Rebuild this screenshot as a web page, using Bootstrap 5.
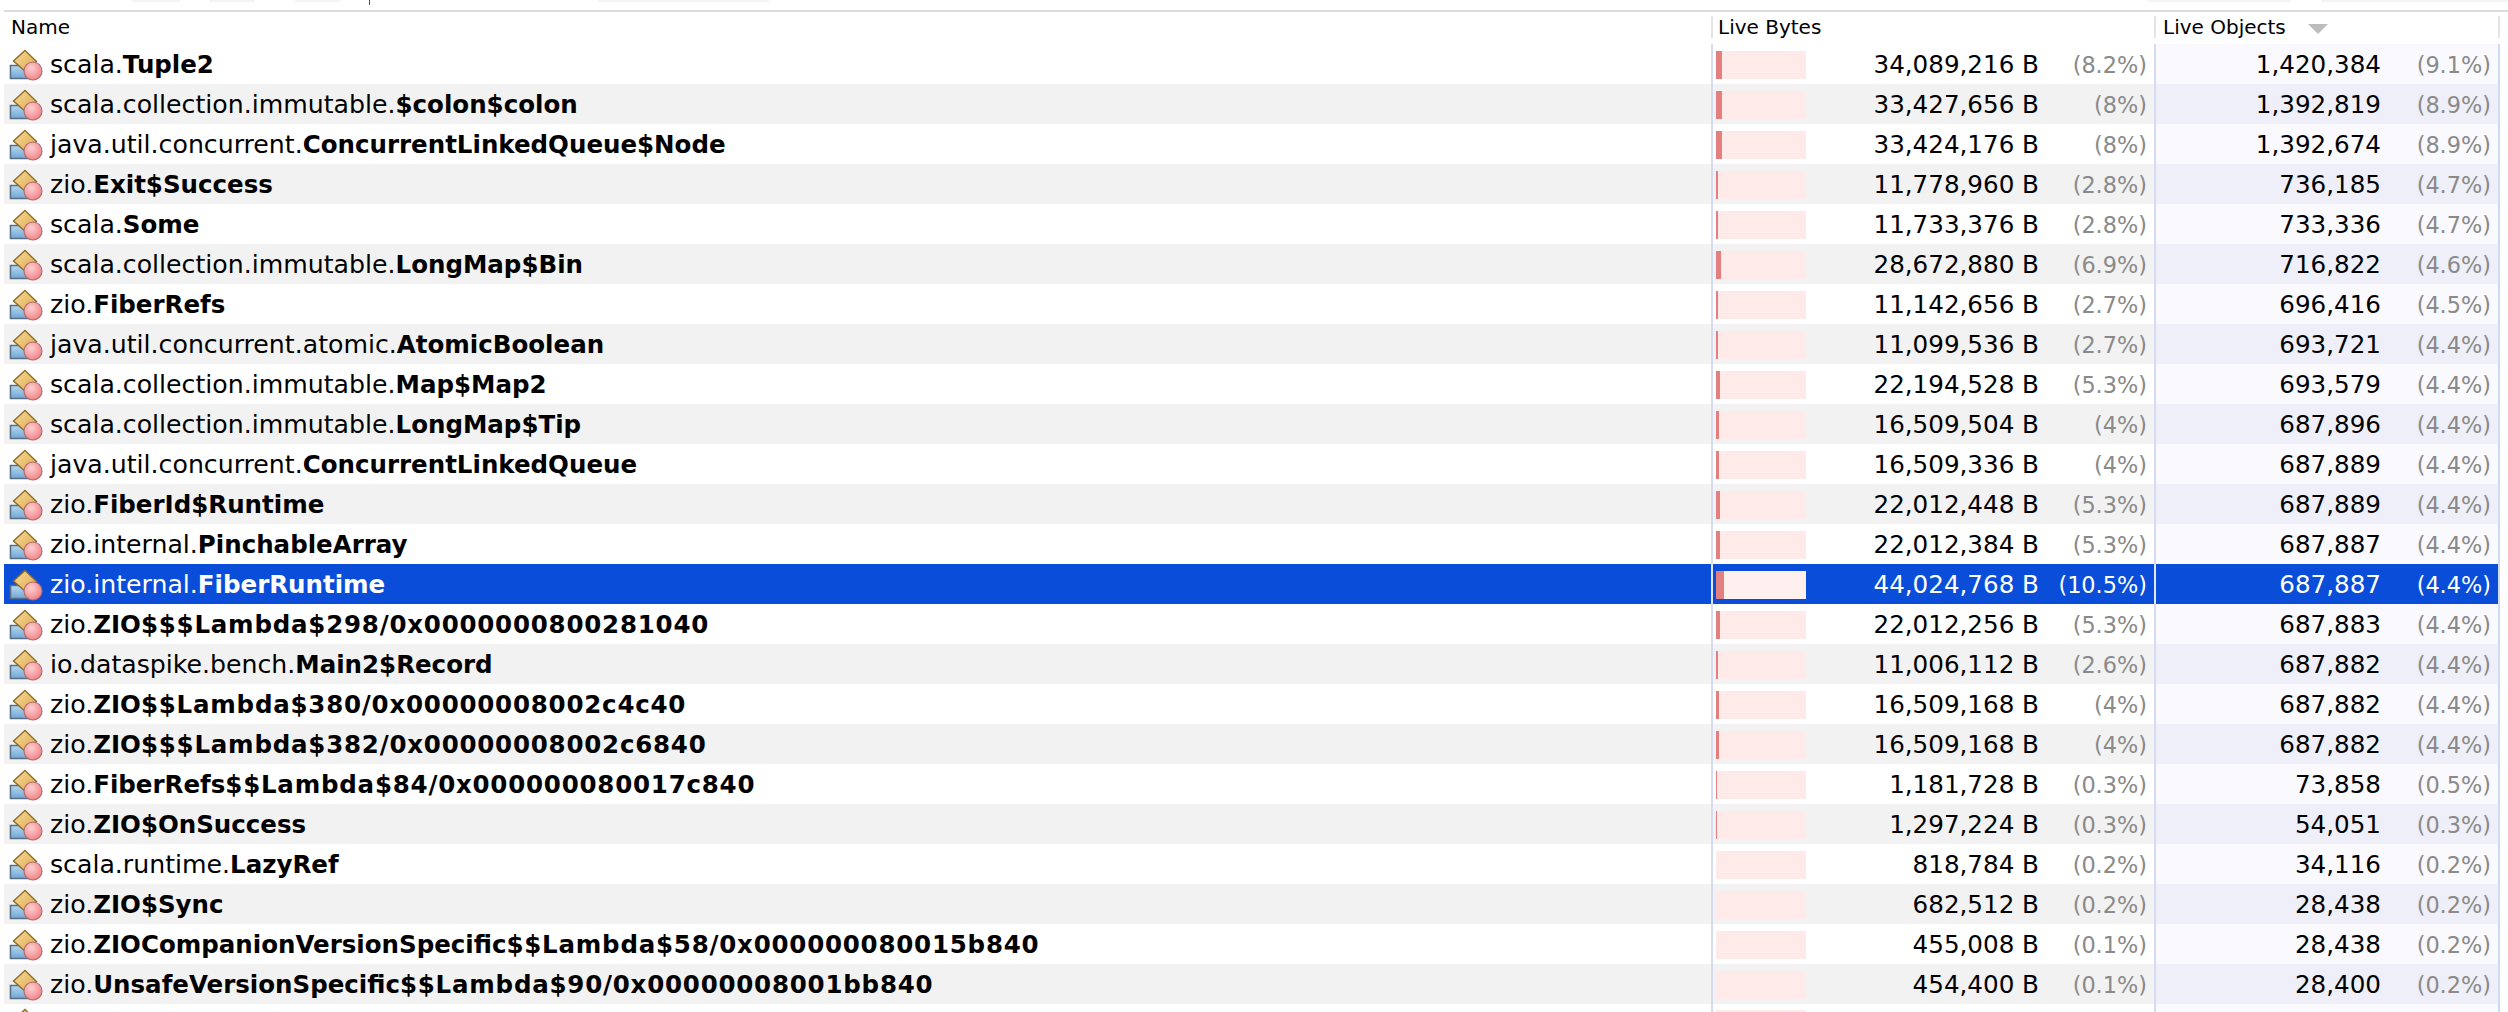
<!doctype html>
<html lang="en"><head><meta charset="utf-8"><title>Live objects</title>
<link rel="stylesheet" href="https://cdn.jsdelivr.net/npm/bootstrap@5.3.0/dist/css/bootstrap.min.css">
<style>
html,body{height:1012px;overflow:hidden;background:#fff}
body{font-family:"DejaVu Sans",sans-serif;color:#000}
.topstrip{height:10px;display:flex;align-items:flex-start}
.tabedge{height:2px;background:#f4f4f4;flex:none}
.te1{width:48px;margin-left:132px}
.te2{width:46px;margin-left:29px}
.te3{width:46px;margin-left:40px}
.te4{width:1px;height:5px;background:#555;margin-left:28px}
.te5{width:171px;margin-left:228px}
.te6{width:144px;margin-left:1378px}
.te7{width:187px;margin-left:30px}
.headrule{height:2px;background:#dcdcdc;margin-left:4px}
.grid-head,.grid-row{display:grid;grid-template-columns:1707px 443px 346px;margin-left:4px;width:2496px}
.grid-head{height:32px;font-size:20px;line-height:30px}
.grid-head>div{padding-left:7px}
.grid-head>.hs-bytes{padding-left:5px}
.hsep{border-left:2px solid #e4e4e4;height:22px;align-self:start;margin-top:4px;line-height:22px}
.hsep-end{border-right:2px solid #e4e4e4}
.grid-row{height:40px;font-size:24.6px;line-height:40px;background:#fff}
.grid-row.alt{background:#f2f2f2}
.cell-name{display:flex;align-items:center;gap:7px;padding-left:5px;white-space:nowrap;font-size:25.2px}
.cell-name span{padding-top:1px}
.cell-name b{font-weight:700;font-size:24.5px}
.cell-name .widen{letter-spacing:.78px;padding:0}
.cell-bytes,.cell-objs{display:flex;align-items:center;white-space:nowrap}
.cell-bytes{border-left:2px solid #d5dcf2;padding-left:3px;padding-right:7px}
.cell-objs{border-left:2px solid #d5dcf2;border-right:2px solid #cfdaf3;background:#f9f9fe;padding-right:7px}
.alt .cell-objs{background:#eeeff8}
.meter{width:90px;height:28px;background:#ffeaea;flex:none}
.meter i{display:block;height:100%;background:#e47f7f}
.val{flex:1;text-align:right}
.pct{color:#8a8a8a;width:108px;text-align:right;flex:none;font-size:22.4px}
.cell-objs .pct{width:110px}
.grid-row.sel,.grid-row.sel .cell-objs{background:#0a4dd8;color:#fff}
.sel .pct{color:#fff}
.sel .meter{background:#fff0f0}
.sel .cell-bytes,.sel .cell-objs{border-left-color:#dfe6fa}
.sort-arrow{display:inline-block;width:0;height:0;border-left:10px solid transparent;border-right:10px solid transparent;border-top:10px solid #bdbdbd;margin-left:22px;vertical-align:middle}
.cls-icon{flex:none;display:block}
</style></head><body>
<svg width="0" height="0" class="position-absolute"><defs>
<linearGradient id="gd" x1="0" y1="0" x2="1" y2="1"><stop offset="0" stop-color="#f8dc9c"/><stop offset="1" stop-color="#dca648"/></linearGradient>
<linearGradient id="gb" x1="0" y1="0" x2="0" y2="1"><stop offset="0" stop-color="#b9d9f2"/><stop offset="1" stop-color="#6fa6d4"/></linearGradient>
<radialGradient id="gc" cx=".4" cy=".35" r=".7"><stop offset="0" stop-color="#ffd0d0"/><stop offset="1" stop-color="#ee7f85"/></radialGradient>
<symbol id="cls" viewBox="0 0 34 32">
<path d="M1.5 16.5H21V29.5H1.5Z" fill="url(#gb)" stroke="#5a6f84" stroke-width="1.6"/>
<path d="M16 1.5L27.5 12.5L17 23L4.5 12Z" fill="url(#gd)" stroke="#8f6b24" stroke-width="1.4"/>
<circle cx="24" cy="22" r="9" fill="url(#gc)" stroke="#b56a6e" stroke-width="1.1"/>
</symbol></defs></svg>
<div class="topstrip"><div class="tabedge te1"></div><div class="tabedge te2"></div><div class="tabedge te3"></div><div class="tabedge te4"></div><div class="tabedge te5"></div><div class="tabedge te6"></div><div class="tabedge te7"></div></div>
<div class="headrule"></div>
<div class="grid-head"><div class="hsep border-0">Name</div><div class="hsep hs-bytes">Live Bytes</div><div class="hsep hsep-end">Live Objects<span class="sort-arrow"></span></div></div>
<div id="rows"></div>
<script>
const D=[["scala.","Tuple2","34,089,216 B","8.2%","1,420,384","9.1%"],
["scala.collection.immutable.","$colon$colon","33,427,656 B","8%","1,392,819","8.9%"],
["java.util.concurrent.","ConcurrentLinkedQueue$Node","33,424,176 B","8%","1,392,674","8.9%"],
["zio.","Exit$Success","11,778,960 B","2.8%","736,185","4.7%"],
["scala.","Some","11,733,376 B","2.8%","733,336","4.7%"],
["scala.collection.immutable.","LongMap$Bin","28,672,880 B","6.9%","716,822","4.6%"],
["zio.","FiberRefs","11,142,656 B","2.7%","696,416","4.5%"],
["java.util.concurrent.atomic.","AtomicBoolean","11,099,536 B","2.7%","693,721","4.4%"],
["scala.collection.immutable.","Map$Map2","22,194,528 B","5.3%","693,579","4.4%"],
["scala.collection.immutable.","LongMap$Tip","16,509,504 B","4%","687,896","4.4%"],
["java.util.concurrent.","ConcurrentLinkedQueue","16,509,336 B","4%","687,889","4.4%"],
["zio.","FiberId$Runtime","22,012,448 B","5.3%","687,889","4.4%"],
["zio.internal.","PinchableArray","22,012,384 B","5.3%","687,887","4.4%"],
["zio.internal.","FiberRuntime","44,024,768 B","10.5%","687,887","4.4%"],
["zio.","ZIO$$$Lambda$298/0x0000000800281040","22,012,256 B","5.3%","687,883","4.4%"],
["io.dataspike.bench.","Main2$Record","11,006,112 B","2.6%","687,882","4.4%"],
["zio.","ZIO$$Lambda$380/0x00000008002c4c40","16,509,168 B","4%","687,882","4.4%"],
["zio.","ZIO$$$Lambda$382/0x00000008002c6840","16,509,168 B","4%","687,882","4.4%"],
["zio.","FiberRefs$$Lambda$84/0x000000080017c840","1,181,728 B","0.3%","73,858","0.5%"],
["zio.","ZIO$OnSuccess","1,297,224 B","0.3%","54,051","0.3%"],
["scala.runtime.","LazyRef","818,784 B","0.2%","34,116","0.2%"],
["zio.","ZIO$Sync","682,512 B","0.2%","28,438","0.2%"],
["zio.","ZIOCompanionVersionSpecific$$Lambda$58/0x000000080015b840","455,008 B","0.1%","28,438","0.2%"],
["zio.","UnsafeVersionSpecific$$Lambda$90/0x00000008001bb840","454,400 B","0.1%","28,400","0.2%"],
["","","","","",""]];
const bold=s=>s.replace(/\$\$.*$/,m=>`<span class="widen">${m}</span>`);
document.getElementById('rows').innerHTML=D.map((r,i)=>{
 const p=parseFloat(r[3])||0,w=p<0.25?0:Math.max(1,Math.round(p*.76));
 const cls=['grid-row',i%2?'alt':'',i==13?'sel':''].join(' ');
 return `<div class="${cls}"><div class="cell-name"><svg class="cls-icon" width="34" height="32"><use href="#cls"/></svg><span>${r[0]}<b>${bold(r[1])}</b></span></div>`+
 `<div class="cell-bytes"><div class="meter"><i style="width:${w}px"></i></div><span class="val">${r[2]}</span><span class="pct">${r[3]?'('+r[3]+')':''}</span></div>`+
 `<div class="cell-objs"><span class="val">${r[4]}</span><span class="pct">${r[5]?'('+r[5]+')':''}</span></div></div>`}).join('');
</script>
<script src="https://cdn.jsdelivr.net/npm/bootstrap@5.3.0/dist/js/bootstrap.bundle.min.js"></script>
</body></html>
